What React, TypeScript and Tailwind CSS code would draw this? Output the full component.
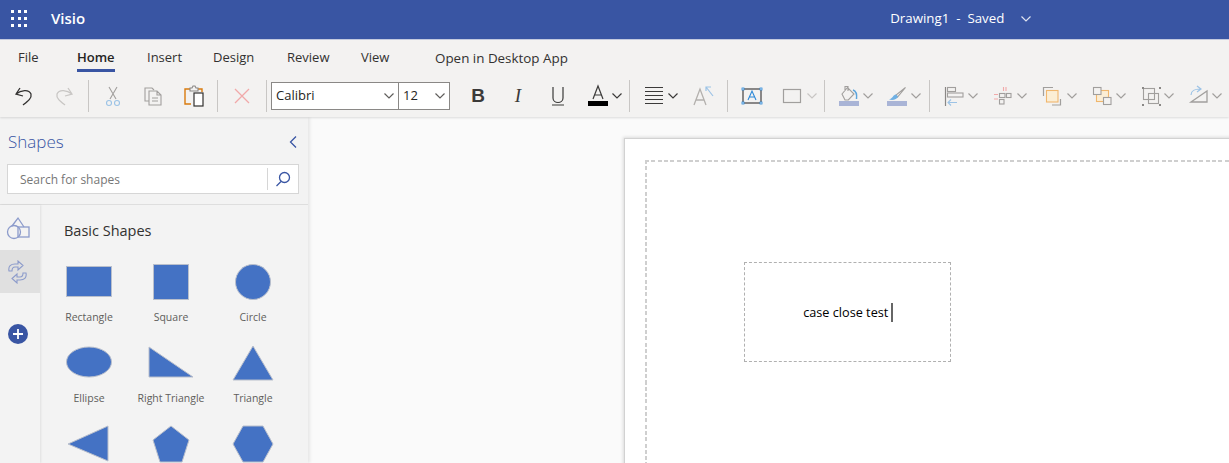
import type { ReactNode } from 'react';

const FONT = "font-['Open_Sans','Noto_Sans',sans-serif]";
const GREY = '#a19f9d';

const Chevron = ({ color = '#605e5c', w = 12 }: { color?: string; w?: number }) => (
  <svg width={w} height="8" viewBox="0 0 12 8" fill="none" stroke={color} strokeWidth="1.2">
    <path d="M1.500 1.500 6 6l4.500-4.500" />
  </svg>
);

const Ico = ({ children, w = 24, h = 24 }: { children: ReactNode; w?: number; h?: number }) => (
  <svg width={w} height={h} viewBox={`0 0 ${w} ${h}`} fill="none" strokeWidth="1.1">
    {children}
  </svg>
);

const Slot = ({
  w,
  children,
  chevron,
  iconClass,
}: {
  w: number;
  children: ReactNode;
  chevron?: ReactNode;
  iconClass?: string;
}) => (
  <div className="relative flex h-[42px] shrink-0 items-center justify-center" style={{ width: w }}>
    <span className={`flex ${iconClass ?? ''}`}>{children}</span>
    {chevron && <span className="absolute right-0 top-[17px] flex h-2 w-3">{chevron}</span>}
  </div>
);

const Sep = ({ mx = '' }: { mx?: string }) => <div className={`h-8 w-px shrink-0 bg-[#c8c6c4] ${mx}`} />;

const Ribbon = () => (
  <div className="flex h-[42px] items-center pl-1">
    <Slot w={40}>
      <Ico w={20} h={20}>
        <path d="M6 2 2 8l7 2M2 8c5-4 13-5 15 0 1 4-3 7-8 11" stroke="#323130" strokeWidth="1.3" />
      </Ico>
    </Slot>
    <Slot w={40}>
      <Ico w={20} h={20}>
        <path d="m14 2 4 6-7 2M18 8C13 4 5 3 3 8c-1 4 3 7 8 11" stroke="#c8c6c4" strokeWidth="1.3" />
      </Ico>
    </Slot>
    <Sep mx="ml-1 mr-1" />
    <Slot w={40}>
      <Ico>
        <path d="m8 3 7 12M16 3 9 15" stroke={GREY} />
        <circle cx="8" cy="19" r="2.500" stroke="#9cc3e6" />
        <circle cx="16" cy="19" r="2.500" stroke="#9cc3e6" />
      </Ico>
    </Slot>
    <Slot w={40}>
      <Ico>
        <path d="M8 17H4V4h7l2 2" stroke={GREY} />
        <path d="M8 7h8l4 4v10H8zM16 7v4h4M11 14h6M11 17h6" stroke={GREY} />
      </Ico>
    </Slot>
    <Slot w={41}>
      <Ico>
        <path d="M9 20H3V5h5M16 5h4v3" stroke="#d97b0e" strokeWidth="1.400" />
        <path d="M8 7V4h2l1-2h2l1 2h2v3z" stroke="#8a8886" />
        <rect x="12" y="9" width="9" height="13" fill="#fff" stroke="#323130" strokeWidth="1.200" />
      </Ico>
    </Slot>
    <Sep mx="ml-[3px] mr-[4px]" />
    <Slot w={40}>
      <Ico>
        <path d="m5 5 14 14M19 5 5 19" stroke="#f1a9a9" strokeWidth="1.300" />
      </Ico>
    </Slot>
    <Sep mx="ml-[4px] mr-[4px]" />
    <div className="flex h-7 w-[128px] shrink-0 items-center justify-between border border-[#8a8886] bg-white pl-1 pr-[3px] text-[13px] text-[#252423]">
      Calibri
      <Chevron />
    </div>
    <div className="-ml-px flex h-7 w-[52px] shrink-0 items-center justify-between border border-[#8a8886] bg-white pl-1 pr-[3px] text-[13px] text-[#252423]">
      12
      <Chevron />
    </div>
    <div className="flex shrink-0 items-center pl-2">
      <Slot w={40}>
        <span className="font-['Liberation_Sans',sans-serif] text-[19px] font-bold text-[#3b3a39]">B</span>
      </Slot>
      <Slot w={40}>
        <span className="font-['Liberation_Serif',serif] text-[19px] italic text-[#3b3a39]">I</span>
      </Slot>
      <Slot w={40}>
        <Ico>
          <path d="M7 3v11c0 6 10 6 10 0V3M6 21h12" stroke="#3b3a39" strokeWidth="1.200" />
        </Ico>
      </Slot>
      <Slot w={45} iconClass="mr-[5px]" chevron={<Chevron color="#3b3a39" />}>
        <Ico>
          <path d="M7 15 12 2l5 13M8.500 11h7" stroke="#3b3a39" strokeWidth="1.200" />
          <rect x="2" y="17" width="20" height="5" fill="#000" />
        </Ico>
      </Slot>
      <div className="w-[6px]" />
      <Sep />
      <div className="w-[3px]" />
      <Slot w={46} iconClass="mr-[4px]" chevron={<Chevron color="#3b3a39" />}>
        <Ico>
          <path d="M3 3.500h18M3 7.500h18M3 11.500h18M3 15.500h18M3 19.500h18" stroke="#3b3a39" />
        </Ico>
      </Slot>
      <Slot w={46}>
        <Ico w={26}>
          <path d="M5 21 11 5l6 16M7 16h8" stroke="#b3b0ad" strokeWidth="1.300" />
          <path d="M17 7V3h5M17 3l7 9" stroke="#9cc3e6" strokeWidth="1.200" />
        </Ico>
      </Slot>
      <div className="w-[2px]" />
      <Sep />
      <Slot w={48}>
        <Ico>
          <rect x="3" y="5" width="18" height="14" stroke="#323130" />
          <path d="m8 16 4-9 4 9M9.500 13h5" stroke="#2b88d8" />
          <g fill="#fff" stroke="#2b88d8" strokeWidth="0.800">
            <rect x="2" y="4" width="2" height="2" />
            <rect x="20" y="4" width="2" height="2" />
            <rect x="2" y="18" width="2" height="2" />
            <rect x="20" y="18" width="2" height="2" />
          </g>
        </Ico>
      </Slot>
      <Slot w={42} iconClass="mr-[10px]" chevron={<Chevron color="#c8c6c4" />}>
        <Ico>
          <rect x="3.500" y="5.500" width="17" height="13" stroke={GREY} strokeWidth="1.200" />
        </Ico>
      </Slot>
      <div className="w-[6px]" />
      <Sep />
      <Slot w={49} iconClass="mr-[1px]" chevron={<Chevron color={GREY} />}>
        <Ico>
          <path d="M5 10 10.500 3.500 17 10l-5.700 6H8zM8 7V2.500h3V7" stroke={GREY} />
          <path d="M16 6c3 1 4 5 3.500 9" stroke="#5ba4dc" strokeWidth="1.500" />
          <rect x="2" y="17" width="20" height="5" fill="#a9b4d6" />
        </Ico>
      </Slot>
      <Slot w={48} iconClass="mr-[2px]" chevron={<Chevron color={GREY} />}>
        <Ico>
          <path d="M20.500 3.500 11 11l1.500 2z" stroke={GREY} />
          <path d="M11 10.500c-3 0-3 4-7 5 4 1 8 0 9-3z" fill="#6fb0e3" />
          <rect x="2" y="17" width="20" height="5" fill="#a9b4d6" />
        </Ico>
      </Slot>
      <div className="w-[7px]" />
      <Sep />
      <Slot w={49} iconClass="mr-[1px]" chevron={<Chevron color={GREY} />}>
        <Ico>
          <path d="M3.500 3v19" stroke="#8a8886" strokeWidth="1.200" />
          <rect x="5.500" y="3.500" width="8" height="4" stroke={GREY} />
          <rect x="5.500" y="9" width="15.500" height="4" stroke={GREY} />
          <path d="M15 18.500H6M9 15.500l-3 3 3 3" stroke="#9cc3e6" />
        </Ico>
      </Slot>
      <Slot w={49} iconClass="mr-[1px]" chevron={<Chevron color={GREY} />}>
        <Ico>
          <rect x="8.500" y="9.500" width="5.500" height="4" stroke={GREY} />
          <rect x="15.500" y="9.500" width="4.500" height="4" stroke={GREY} />
          <rect x="8.500" y="15.500" width="4.500" height="4.500" stroke={GREY} />
          <path d="M12.500 3v4M15 3v4M3 10.500h4M3 15h4" stroke="#f1a9a9" />
        </Ico>
      </Slot>
      <Slot w={50} iconClass="mr-[2px]" chevron={<Chevron color={GREY} />}>
        <Ico>
          <path d="M3.500 12V3.500H13M20.500 15v6H12" stroke={GREY} strokeWidth="1.200" />
          <rect x="6.500" y="6.500" width="11.500" height="11.500" fill="#fbeed5" stroke="#f0b76e" />
        </Ico>
      </Slot>
      <Slot w={49} chevron={<Chevron color={GREY} />}>
        <Ico>
          <rect x="5.500" y="6.500" width="12" height="11" fill="#fbeed5" stroke="#f0b76e" />
          <rect x="2.500" y="3.500" width="7.500" height="7" fill="#f3f2f1" stroke={GREY} />
          <rect x="12.500" y="13.500" width="7.500" height="7" fill="#f3f2f1" stroke={GREY} />
        </Ico>
      </Slot>
      <Slot w={48} chevron={<Chevron color={GREY} />}>
        <Ico>
          <rect x="4.500" y="4.500" width="11" height="11" stroke={GREY} />
          <rect x="9.500" y="9.500" width="10" height="10" stroke={GREY} />
          <g fill="#8a8886">
            <rect x="3" y="3" width="2" height="2" />
            <rect x="20" y="3" width="2" height="2" />
            <rect x="3" y="20" width="2" height="2" />
            <rect x="20" y="20" width="2" height="2" />
          </g>
        </Ico>
      </Slot>
      <Slot w={48} chevron={<Chevron color={GREY} />}>
        <Ico>
          <path d="M4 18 20 7v11z" stroke={GREY} strokeWidth="1.300" />
          <path d="M4 11c0-4 4-6 9-6M10 2l4 3-4 3" stroke="#9cc3e6" strokeWidth="1.200" />
        </Ico>
      </Slot>
    </div>
  </div>
);

const tabs = [
  { label: 'File', cls: 'ml-[18px] w-[20px]' },
  { label: 'Home', cls: 'ml-[39px] w-[38px]', active: true },
  { label: 'Insert', cls: 'ml-[32px] w-[34px]' },
  { label: 'Design', cls: 'ml-[32px] w-[42px]' },
  { label: 'Review', cls: 'ml-[32px] w-[42px]' },
  { label: 'View', cls: 'ml-[32px] w-[29px]' },
];

const SHAPE = { fill: '#4472c4', stroke: '#b9bfcc', strokeWidth: 1 };

const shapes: { label: string; art: ReactNode }[] = [
  { label: 'Rectangle', art: <rect x="7.500" y="4.500" width="45" height="30" {...SHAPE} /> },
  { label: 'Square', art: <rect x="12.500" y="2.500" width="35" height="35" {...SHAPE} /> },
  { label: 'Circle', art: <circle cx="30" cy="20" r="17.500" {...SHAPE} /> },
  { label: 'Ellipse', art: <ellipse cx="30" cy="19" rx="22.500" ry="15" {...SHAPE} /> },
  { label: 'Right Triangle', art: <path d="M8 4v30h44z" {...SHAPE} /> },
  { label: 'Triangle', art: <path d="M30 3 50 37H10z" {...SHAPE} /> },
  { label: '', art: <path d="M49 2v35L9 20z" {...SHAPE} /> },
  { label: '', art: <path d="m30 2 18 14-7 22H19l-7-22z" {...SHAPE} /> },
  { label: '', art: <path d="M20 2h20l10 18-10 18H20L10 20z" {...SHAPE} /> },
];

const SYNC_ARROW = 'M2 11C1 6 4 4 8 4h3V1l5 4.500-5 4.500V7H8C6 7 5 8.500 5 11z';

const Sidebar = () => (
  <aside className="z-10 flex h-full w-[308px] shrink-0 flex-col bg-[#f3f3f3] shadow-[2px_0_3px_rgba(0,0,0,0.08)]">
    <div className="flex h-[88px] shrink-0 flex-col border-b border-[#dedede] pl-[7px] pr-[9px]">
      <div className="flex h-[47px] items-center justify-between pr-[1px] pt-[3px]">
        <span className="pl-px text-[17px] font-light text-[#3955a3]">Shapes</span>
        <svg width="10" height="14" viewBox="0 0 10 14" fill="none" stroke="#3955a3" strokeWidth="1.300">
          <path d="M8 1.500 2.500 7 8 12.500" />
        </svg>
      </div>
      <div className="flex h-[30px] items-center border border-[#d6d6d6] bg-white pl-3">
        <span className="mt-px flex-1 text-[12px] text-[#767676]">Search for shapes</span>
        <div className="flex h-[22px] w-[31px] items-center justify-center border-l border-[#d6d6d6]">
          <svg width="16" height="16" viewBox="0 0 16 16" fill="none" stroke="#3955a3" strokeWidth="1.300">
            <circle cx="9.500" cy="6.500" r="5" />
            <path d="M6 10.500 1.500 15" />
          </svg>
        </div>
      </div>
    </div>
    <div className="flex min-h-0 flex-1">
      <div className="flex w-10 shrink-0 flex-col shadow-[1px_0_2px_rgba(0,0,0,0.08)]">
        <div className="flex h-[45px] items-center justify-center pr-1">
          <svg width="26" height="24" viewBox="0 0 26 24" fill="none" stroke="#8c9bcb" strokeWidth="1.300">
            <circle cx="9" cy="16" r="6.500" />
            <path d="M7 10 13 2l6 9" />
            <rect x="13" y="11" width="11" height="10" />
          </svg>
        </div>
        <div className="flex h-[43px] items-center justify-center bg-[#e0e0e0] pr-1">
          <svg width="22" height="24" viewBox="0 0 22 24" fill="none" stroke="#8c9bcb" strokeWidth="1.100">
            <path d={SYNC_ARROW} />
            <path d={SYNC_ARROW} transform="rotate(180 10.500 12)" />
          </svg>
        </div>
        <div className="flex h-[84px] items-center justify-center pb-[2px] pr-1">
          <div className="flex size-5 items-center justify-center rounded-full bg-[#3955a3]">
            <svg width="12" height="12" viewBox="0 0 12 12" stroke="#fff" strokeWidth="1.800">
              <path d="M6 1v10M1 6h10" />
            </svg>
          </div>
        </div>
      </div>
      <div className="min-w-0 flex-1 pl-[8px]">
        <div className="flex h-[57px] items-start pl-[16px] pt-[16px] text-[14.500px] leading-5 text-[#323130]">Basic Shapes</div>
        <div className="grid auto-rows-[81px] grid-cols-[82px_82px_82px]">
          {shapes.map((s, i) => (
            <div key={i} className="flex flex-col items-center">
              <svg width="60" height="40" viewBox="0 0 60 40">
                {s.art}
              </svg>
              {s.label && (
                <span className="mt-2 whitespace-nowrap text-[10.500px] leading-[14px] text-[#605e5c]">{s.label}</span>
              )}
            </div>
          ))}
        </div>
      </div>
    </div>
  </aside>
);

export default function App() {
  return (
    <div className={`flex h-[463px] w-[1229px] flex-col overflow-hidden bg-[#fafafa] ${FONT}`}>
      <header className="flex h-10 shrink-0 items-center border-b border-[#c5cbe0] bg-[#3955a3] pb-[2px] text-white">
        <div className="ml-[11px] grid w-4 grid-cols-3 gap-[4px]">
          {Array.from({ length: 9 }).map((_, i) => (
            <span key={i} className="size-[3px] bg-white" />
          ))}
        </div>
        <span className="ml-[24px] text-[15px] font-semibold">Visio</span>
        <span className="ml-[805px] whitespace-nowrap text-[13.300px]">Drawing1 &nbsp;-&nbsp; Saved</span>
        <span className="ml-[16px] flex">
          <Chevron color="#dfe3f0" />
        </span>
      </header>

      <div className="z-20 shrink-0 bg-[#f3f2f1] shadow-[0_1px_2px_rgba(0,0,0,0.12)]">
        <nav className="flex h-[35px] items-start text-[13px] leading-5 text-[#323130]">
          {tabs.map((t) => (
            <div key={t.label} className={`flex flex-col pt-[7px] ${t.cls}`}>
              <span className={`whitespace-nowrap ${t.active ? 'font-semibold text-[#252423]' : ''}`}>{t.label}</span>
              {t.active && <span className="mt-[2px] h-[3px] w-full bg-[#3955a3]" />}
            </div>
          ))}
          <div className="ml-[45px] whitespace-nowrap pt-[8px] text-[13.400px]">Open in Desktop App</div>
        </nav>
        <Ribbon />
      </div>

      <div className="flex min-h-0 flex-1">
        <Sidebar />
        <main className="min-w-0 flex-1 overflow-hidden pl-[316px] pt-[21px]">
          <div className="h-[400px] w-[800px] border-l border-t border-[#d2d2d2] bg-white pl-[20px] pt-[21px] shadow-[-1px_-1px_3px_rgba(0,0,0,0.12)]">
            <div className="relative h-[360px] w-[760px] [background:repeating-linear-gradient(90deg,#cfcfcf_0_4px,transparent_4px_6.300px)_top/100%_2px_no-repeat,repeating-linear-gradient(180deg,#cfcfcf_0_4px,transparent_4px_6.300px)_left/2px_100%_no-repeat]">
              <div className="absolute left-[99px] top-[102px] flex h-[100px] w-[207px] items-center justify-center border border-dashed border-[#b0b0b0] pl-px">
                <span className="mt-[2px] whitespace-nowrap text-[12.700px] text-black">case close test</span>
                <span className="ml-[3px] h-[19px] w-[1.500px] bg-[#666]" />
              </div>
            </div>
          </div>
        </main>
      </div>
    </div>
  );
}
